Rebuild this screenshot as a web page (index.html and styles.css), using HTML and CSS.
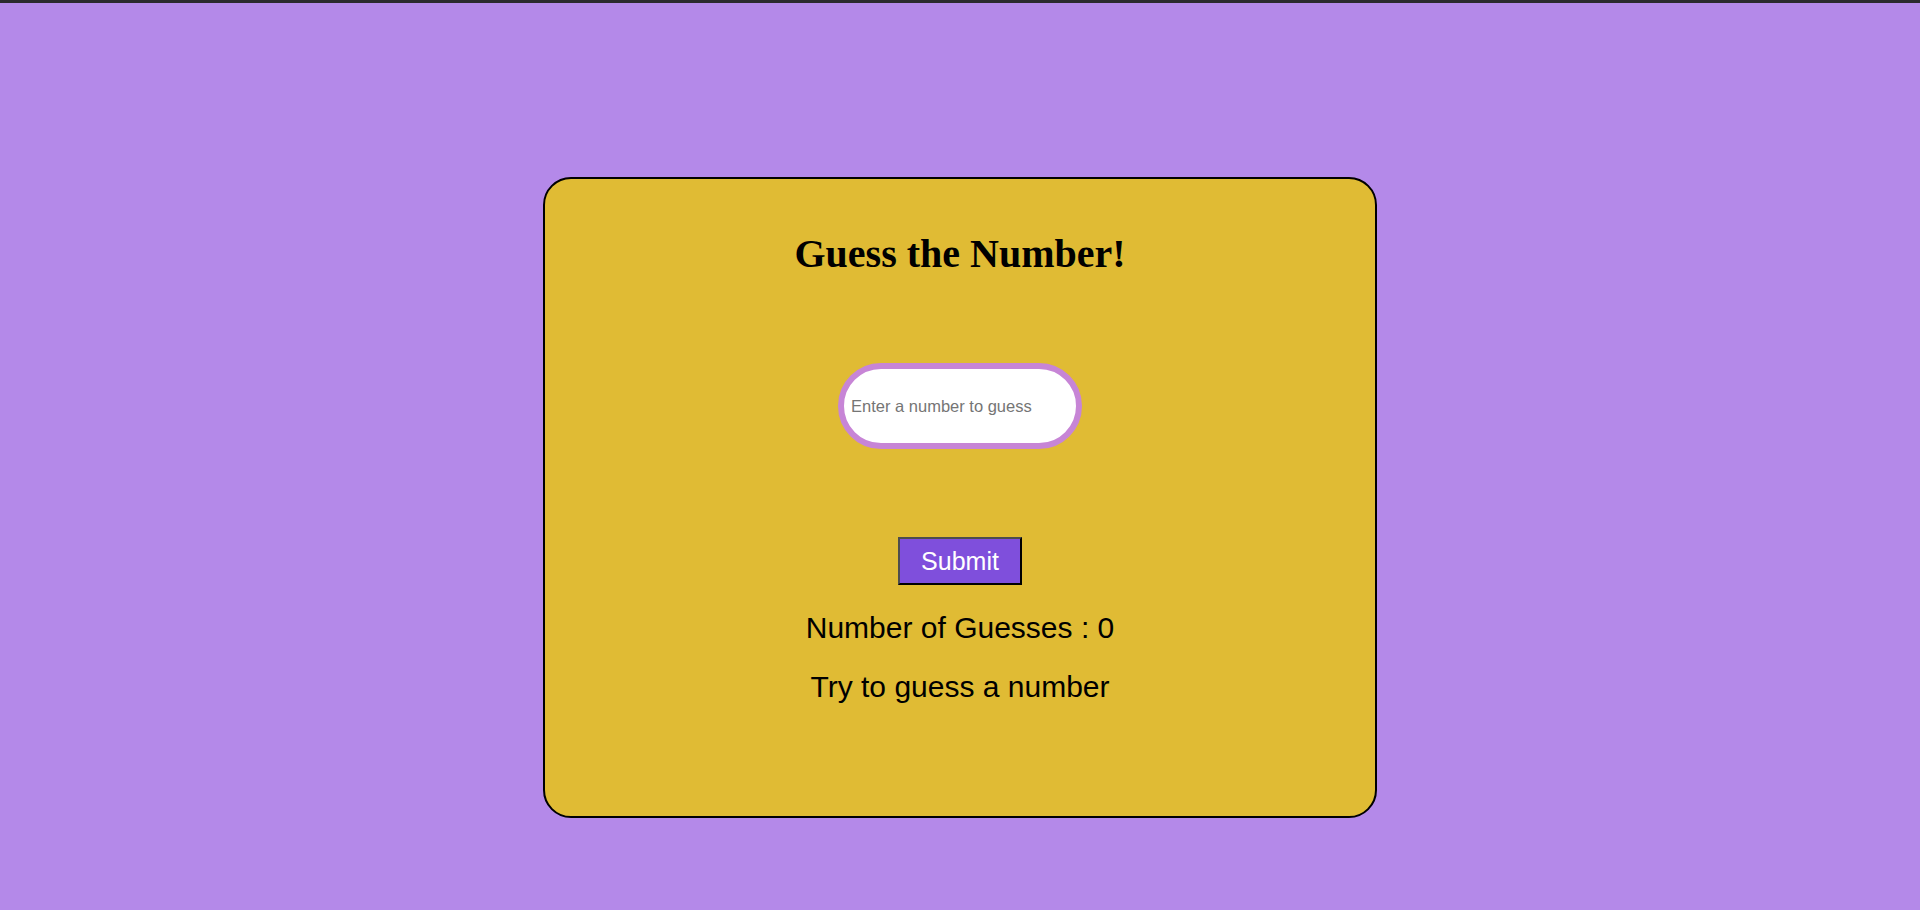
FILE: index.html
```html
<!DOCTYPE html>
<html lang="en">
<head>
<meta charset="utf-8">
<title>Guess the Number</title>
<link rel="stylesheet" href="styles.css">
</head>
<body>
<div class="topbar"></div>
<main class="game">
  <h1 class="game-title">Guess the Number!</h1>
  <input class="guess-input" type="number" placeholder="Enter a number to guess">
  <button class="submit-btn" type="button">Submit</button>
  <p class="status">Number of Guesses : 0</p>
  <p class="status">Try to guess a number</p>
</main>
</body>
</html>
```
FILE: styles.css
```css
html, body {
  margin: 0;
  padding: 0;
}

body {
  min-height: 910px;
  background: #b489e9;
  font-family: "Liberation Sans", Arial, sans-serif;
}

.topbar {
  height: 3px;
  background: #2b2a2e;
}

.game {
  box-sizing: border-box;
  width: 834px;
  height: 641px;
  margin: 174px auto 0;
  background: #e0bb34;
  border: 2px solid #000;
  border-radius: 28px;
  display: flex;
  flex-direction: column;
  align-items: center;
}

.game-title {
  margin: 52px 0 0;
  font-family: "Liberation Serif", "Times New Roman", serif;
  font-size: 40px;
  font-weight: bold;
  line-height: 46px;
  color: #000;
}

.guess-input {
  box-sizing: border-box;
  width: 244px;
  height: 86px;
  margin-top: 86px;
  padding: 0 7px;
  border: 6px solid #c785d6;
  border-radius: 43px;
  background: #fff;
  font-family: "Liberation Sans", Arial, sans-serif;
  font-size: 16.5px;
  color: #000;
  outline: none;
  -moz-appearance: textfield;
}

.guess-input::-webkit-outer-spin-button,
.guess-input::-webkit-inner-spin-button {
  -webkit-appearance: none;
  margin: 0;
}

.guess-input::placeholder {
  color: #757575;
}

.submit-btn {
  box-sizing: border-box;
  width: 124px;
  height: 48px;
  margin-top: 88px;
  padding: 0;
  border: 2px solid;
  border-color: #4d4d4d #000 #000 #4d4d4d;
  background: #7f4fdc;
  color: #fff;
  font-family: "Liberation Sans", Arial, sans-serif;
  font-size: 25px;
  cursor: pointer;
}

.status {
  margin: 26px 0 0;
  font-size: 30px;
  line-height: 34px;
  color: #000;
}

.status + .status {
  margin-top: 25px;
}
```
